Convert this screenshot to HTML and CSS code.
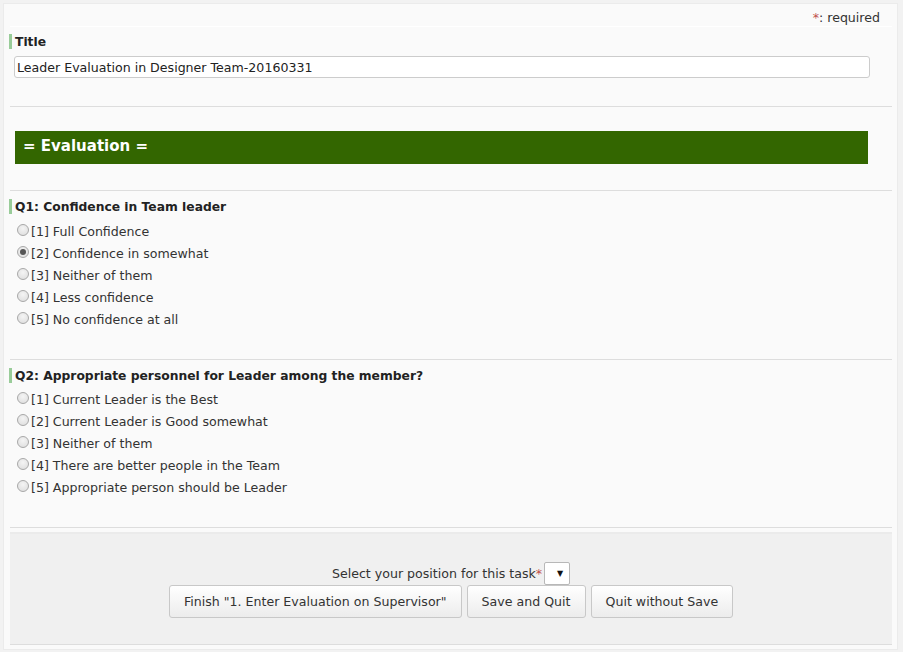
FILE: index.html
```html
<!DOCTYPE html>
<html>
<head>
<meta charset="utf-8">
<link rel="stylesheet" href="styles.css">
</head>
<body>
<div class="panel">
  <div class="required-row"><span class="req">*</span>: required</div>

  <div class="field-label">Title</div>
  <input class="title-input" type="text" value="Leader Evaluation in Designer Team-20160331">

  <div class="rule"></div>

  <div class="banner">= Evaluation =</div>

  <div class="rule rule-banner"></div>

  <div class="question">
    <div class="field-label">Q1: Confidence in Team leader</div>
    <div class="options">
      <label class="option"><span class="radio"></span>[1] Full Confidence</label>
      <label class="option"><span class="radio checked"></span>[2] Confidence in somewhat</label>
      <label class="option"><span class="radio"></span>[3] Neither of them</label>
      <label class="option"><span class="radio"></span>[4] Less confidence</label>
      <label class="option"><span class="radio"></span>[5] No confidence at all</label>
    </div>
  </div>

  <div class="rule rule-q"></div>

  <div class="question">
    <div class="field-label">Q2: Appropriate personnel for Leader among the member?</div>
    <div class="options options-tight">
      <label class="option"><span class="radio"></span>[1] Current Leader is the Best</label>
      <label class="option"><span class="radio"></span>[2] Current Leader is Good somewhat</label>
      <label class="option"><span class="radio"></span>[3] Neither of them</label>
      <label class="option"><span class="radio"></span>[4] There are better people in the Team</label>
      <label class="option"><span class="radio"></span>[5] Appropriate person should be Leader</label>
    </div>
  </div>

  <div class="rule rule-q"></div>

  <div class="footer">
    <div class="position-row">
      <span>Select your position for this task<span class="req">*</span></span>
      <span class="select">&#9660;</span>
    </div>
    <div class="buttons">
      <button class="btn">Finish "1. Enter Evaluation on Supervisor"</button>
      <button class="btn">Save and Quit</button>
      <button class="btn">Quit without Save</button>
    </div>
  </div>
</div>
</body>
</html>
```
FILE: styles.css
```css
html, body {
  margin: 0;
  padding: 0;
  background: #f2f2f2;
}
body {
  font-family: "DejaVu Sans", Verdana, sans-serif;
  font-size: 12.6px;
  color: #333;
  padding: 3px 5px 2px 3px;
}
.panel {
  background: #fafafa;
  border: 1px solid #ebebeb;
  padding: 0 5px 4px 6px;
}
.required-row {
  height: 22px;
  line-height: 27px;
  text-align: right;
  padding-right: 12px;
  border-bottom: 1px solid #ffffff;
  color: #333;
}
.req {
  color: #c0504d;
}
.field-label {
  margin-left: -1px;
  border-left: 3px solid #99cc99;
  padding-left: 3px;
  height: 15px;
  line-height: 17px;
  font-weight: bold;
  color: #222;
  font-size: 12.3px;
}
.required-row + .field-label {
  margin-top: 7px;
}
.title-input {
  display: block;
  box-sizing: border-box;
  margin: 7px 0 0 4px;
  width: 856px;
  height: 22px;
  border: 1px solid #cccccc;
  border-radius: 3px;
  background: #fff;
  padding: 0 2px;
  font-family: inherit;
  font-size: 12.6px;
  color: #222;
  outline: none;
}
.rule {
  height: 1px;
  background: #dddddd;
  margin-top: 28px;
}
.banner {
  margin: 24px 0 0 5px;
  width: 845px;
  height: 33px;
  line-height: 31px;
  background: #336600;
  color: #fff;
  font-weight: bold;
  font-size: 15px;
  padding-left: 8px;
}
.rule-banner {
  margin-top: 26px;
}
.question {
  padding-top: 8px;
}
.options {
  margin-top: 6px;
}
.options-tight {
  margin-top: 5px;
}
.option {
  display: flex;
  align-items: center;
  height: 22px;
  padding-left: 7px;
  color: #333;
}
.radio {
  box-sizing: border-box;
  width: 12px;
  height: 12px;
  border-radius: 50%;
  border: 1px solid #a8a8a8;
  background: radial-gradient(circle at 50% 35%, #f4f4f4 0%, #dcdcdc 100%);
  margin: 0 2px 3px 0;
  position: relative;
  flex: none;
}
.radio.checked::after {
  content: "";
  position: absolute;
  left: 2px;
  top: 2px;
  width: 6px;
  height: 6px;
  border-radius: 50%;
  background: #555;
}
.rule-q {
  margin-top: 29px;
}
.footer {
  margin-top: 4px;
  background: #f0f0f0;
  border-top: 2px solid #ebebeb;
  border-bottom: 1px solid #dddddd;
  padding: 27px 0 26px;
  display: flex;
  flex-direction: column;
  align-items: center;
}
.position-row {
  display: flex;
  align-items: center;
  height: 24px;
}
.select {
  box-sizing: border-box;
  width: 26px;
  height: 23px;
  margin-left: 2px;
  background: #fff;
  border: 1px solid #b8b8b8;
  border-radius: 2px;
  font-size: 8px;
  line-height: 21px;
  text-align: right;
  padding-right: 6px;
  color: #111;
}
.buttons {
  display: flex;
  gap: 5px;
}
.btn {
  box-sizing: border-box;
  height: 33px;
  padding: 0 14px;
  border: 1px solid #c8c8c8;
  border-radius: 3px;
  background: linear-gradient(#ffffff, #ececec);
  font-family: inherit;
  font-size: 12.6px;
  color: #333;
}
```
